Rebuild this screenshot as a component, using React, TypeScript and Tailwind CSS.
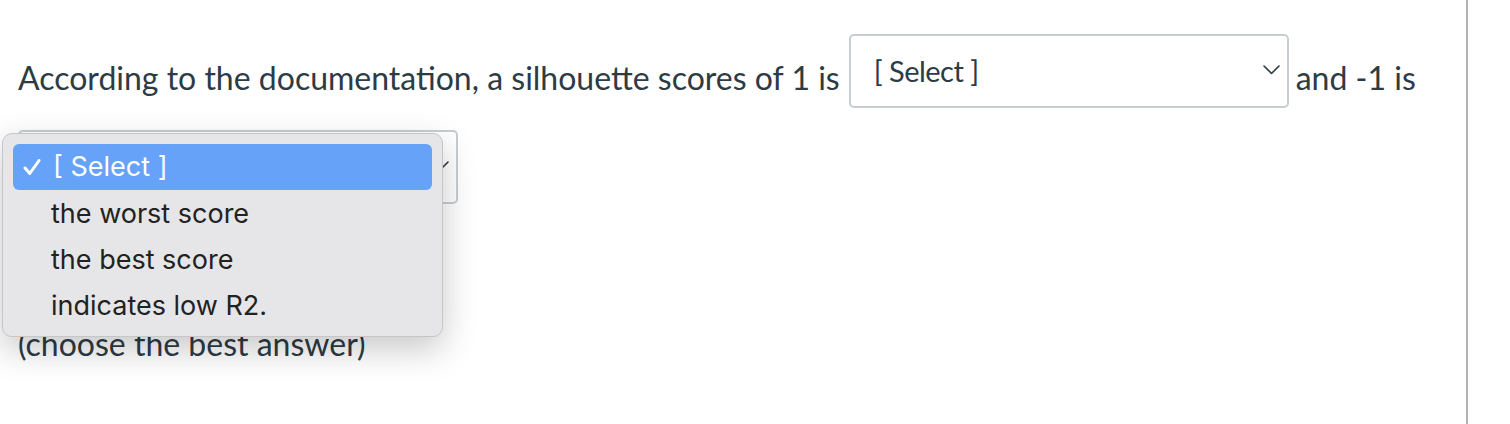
const options = ['the worst score', 'the best score', 'indicates low R2.'];

function SelectBox({ className }: { className?: string }) {
  return (
    <div
      className={
        'relative flex h-[74px] w-[440px] items-center rounded-[5px] border-2 border-[#c7cdd1] bg-white pl-[23px] ' +
        (className ?? '')
      }
    >
      <span className="text-[29px] tracking-[-0.5px] text-[#2d3b45]">[ Select ]</span>
      <svg
        width="17"
        height="10"
        viewBox="0 0 17 10"
        className="absolute right-[7px] top-[29px]"
      >
        <path d="M1 1 L8.5 8.5 L16 1" fill="none" stroke="#2d3b45" strokeWidth="1.6" strokeLinecap="round" strokeLinejoin="round" />
      </svg>
    </div>
  );
}

export default function App() {
  return (
    <div className="min-h-[424px] bg-white" style={{ fontFamily: 'Lato, "Open Sans", sans-serif' }}>
      <div className="relative min-h-[424px] w-[1468px] border-r-2 border-[#b3b3b3] pl-[18px] pt-[34px] text-[32px] text-[#2d3b45]">
        <div className="flex items-center">
          <span className="mt-[13px]">According to the documentation, a silhouette scores of 1 is</span>
          <SelectBox className="ml-[9px]" />
          <span className="ml-[7px] mt-[13px]">and -1 is</span>
        </div>

        <div className="mt-[22px]">
          <SelectBox />
        </div>

        <div className="mt-[124px] leading-[32px]">(choose the best answer)</div>

        {/* native select popup */}
        <div
          className="absolute left-[2px] top-[133px] w-[441px] rounded-[10px] border border-[#c6c6c8] bg-[#e6e6e8] px-[10px] pt-[10px] pb-[8px] shadow-[0_12px_34px_rgba(0,0,0,0.22)]"
          style={{ fontFamily: 'Inter, "Noto Sans", sans-serif' }}
        >
          <div className="flex h-[46px] items-center rounded-[6px] bg-[#66a2f8] pl-[10px] text-[27px] text-white">
            <svg width="18" height="18" viewBox="0 0 18 18" className="mr-[12px]">
              <path d="M2 10 L6.8 15.5 L16 2.5" fill="none" stroke="white" strokeWidth="3" strokeLinecap="round" strokeLinejoin="round" />
            </svg>
            [ Select ]
          </div>
          {options.map((o) => (
            <div key={o} className="flex h-[46px] items-center pl-[38px] pt-[3px] text-[27px] text-[#222222]">
              {o}
            </div>
          ))}
        </div>
      </div>
    </div>
  );
}
